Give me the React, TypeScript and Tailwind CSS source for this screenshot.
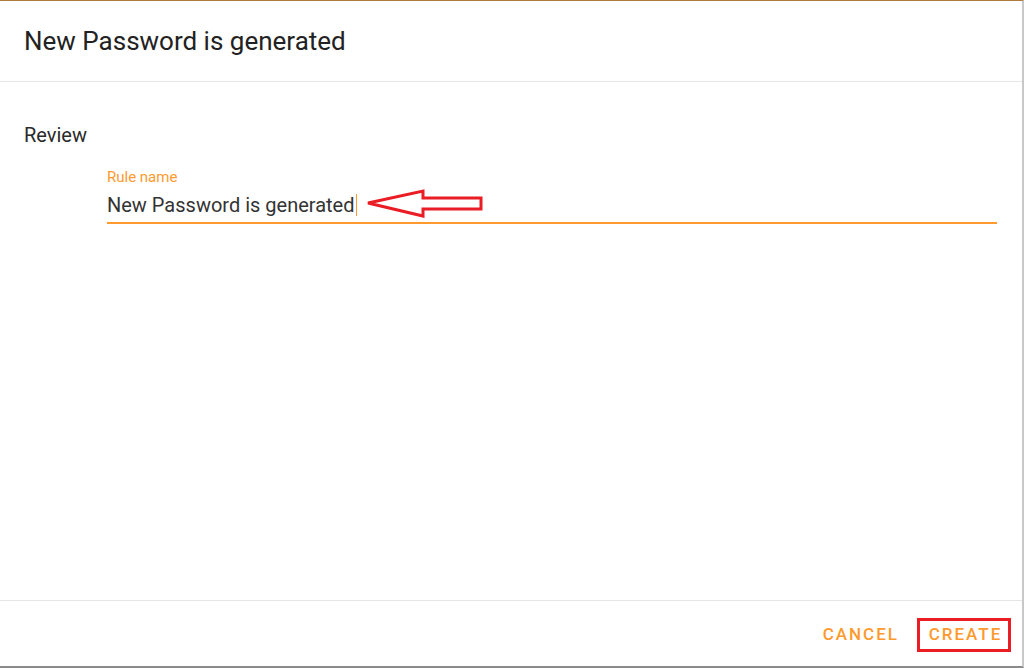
export default function App() {
  return (
    <div className="h-[668px] w-[1024px] overflow-hidden bg-white font-['Roboto',sans-serif] text-[#212121]">
      <div className="flex h-full w-full flex-col border-t border-t-[#b07a3a] border-r-2 border-r-[#c8c8c8] border-b-2 border-b-[#8a8a8a]">
        {/* Header */}
        <div className="flex h-[81px] shrink-0 items-center border-b border-[#e6e6e6] px-6">
          <h1 className="text-[26px] font-normal leading-none text-[#222]">New Password is generated</h1>
        </div>

        {/* Body */}
        <div className="flex flex-1 flex-col px-6 pt-[43px]">
          <h2 className="text-[20px] leading-none text-[#2a2a2a]">Review</h2>
          <div className="ml-[83px] mr-[1px] mt-[25px] flex flex-col">
            <label className="text-[15px] leading-none text-[#ff9a2e]">Rule name</label>
            <div className="relative mt-[3px] flex h-[36px] items-center border-b-2 border-[#ff9a2e]">
              <span className="text-[20px] leading-none text-[#333]">New Password is generated</span>
              <span className="ml-[1px] h-[22px] w-[1px] bg-[#ff9a2e]" />
              <svg
                className="absolute left-[258px] top-[1px]"
                width="120"
                height="30"
                viewBox="0 0 120 30"
              >
                <polygon
                  points="3,14 58,2 58,9 116,9 116,20 58,20 58,27"
                  fill="none"
                  stroke="#ea1c24"
                  strokeWidth="3"
                  strokeLinejoin="miter"
                />
              </svg>
            </div>
          </div>
        </div>

        {/* Footer */}
        <div className="flex h-[66px] shrink-0 items-center justify-end gap-[18px] border-t border-[#e6e6e6] pt-[2px] pr-[11px]">
          <button className="text-[17px] font-medium tracking-[2px] text-[#ff9a2e]">CANCEL</button>
          <div className="flex h-[34px] w-[94px] items-center justify-center border-[3px] border-[#ea1c24] pl-[3px]">
            <button className="text-[17px] font-medium tracking-[2px] text-[#ff9a2e]">CREATE</button>
          </div>
        </div>
      </div>
    </div>
  );
}
